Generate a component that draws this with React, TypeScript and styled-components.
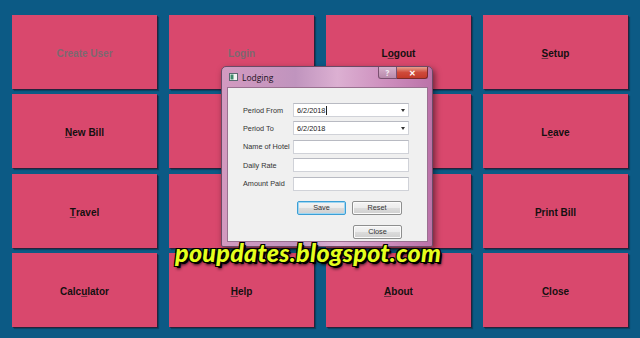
import React from "react";
import styled, { createGlobalStyle } from "styled-components";

const Global = createGlobalStyle`
  html, body { margin: 0; padding: 0; }
  body { background: #0c5a85; width: 640px; height: 338px; overflow: hidden; font-family: "Liberation Sans", Arial, sans-serif; }
`;

const Page = styled.div`
  position: relative;
  width: 640px;
  height: 338px;
  box-sizing: border-box;
  padding: 15px 12px 0 12px;
  background: #0c5a85;
`;

const Grid = styled.div`
  display: grid;
  grid-template-columns: repeat(4, 145px);
  grid-auto-rows: 74px;
  column-gap: 12px;
  row-gap: 5.33px;
`;

const Tile = styled.div<{ $disabled?: boolean }>`
  background: #d9486d;
  box-shadow: 1px 1px 0 rgba(60, 10, 30, 0.55), 2px 2px 1px rgba(0, 0, 0, 0.25);
  display: flex;
  align-items: center;
  justify-content: center;
  font-weight: bold;
  font-size: 10px;
  padding-top: 3px;
  box-sizing: border-box;
  color: ${(p) => (p.$disabled ? "#7d6870" : "#141010")};
  u { text-decoration-color: #6a3040; text-underline-offset: 1px; }
`;

const Dialog = styled.div`
  position: absolute;
  left: 221px;
  top: 66px;
  width: 212px;
  height: 181px;
  box-sizing: border-box;
  border: 1px solid #6b4a66;
  border-radius: 5px 5px 2px 2px;
  background: linear-gradient(90deg, #d39ac0 0%, #c094be 35%, #dcb0d2 55%, #cc8cbc 80%, #bb72a8 100%);
  box-shadow: 2px 3px 6px rgba(0, 0, 0, 0.5);
  display: flex;
  flex-direction: column;
  padding: 0 4px 4px 5px;
`;

const TitleBar = styled.div`
  height: 20px;
  display: flex;
  align-items: center;
  gap: 4px;
  padding-left: 2px;
  font-family: "Open Sans", "Liberation Sans", sans-serif;
  font-size: 8.5px;
  color: #1a1020;
`;

const TitleText = styled.span`
  flex: 1;
`;

const TitleButtons = styled.div`
  align-self: flex-start;
  display: flex;
`;

const HelpBtn = styled.div`
  width: 19px;
  height: 12px;
  box-sizing: border-box;
  border: 1px solid #7a5070;
  border-top: none;
  border-radius: 0 0 0 3px;
  background: linear-gradient(#d7b0cc, #b889ab);
  color: #f4eef4;
  font-size: 8px;
  font-weight: bold;
  display: flex;
  align-items: center;
  justify-content: center;
`;

const CloseBtn = styled.div`
  width: 31px;
  height: 12px;
  box-sizing: border-box;
  border: 1px solid #7a2a2a;
  border-top: none;
  border-left: none;
  border-radius: 0 0 3px 0;
  background: linear-gradient(#e8a090, #cf4a3a 50%, #c33a2a);
  color: #fff;
  font-size: 8px;
  font-weight: bold;
  display: flex;
  align-items: center;
  justify-content: center;
`;

const Client = styled.div`
  flex: 1;
  background: #f0f0f0;
  border: 1px solid #9a7090;
  display: flex;
  flex-direction: column;
  padding: 15px 0 0 15px;
  font-family: "Liberation Sans", Arial, sans-serif;
  font-size: 7.3px;
  color: #333;
`;

const Form = styled.div`
  display: grid;
  grid-template-columns: 50px 116px;
  grid-auto-rows: 14px;
  row-gap: 4.4px;
  align-items: center;
`;

const Label = styled.div`
  white-space: nowrap;
`;

const Field = styled.div`
  height: 14px;
  box-sizing: border-box;
  background: #fff;
  border: 1px solid #d0d2d8;
  border-top-color: #b8bac2;
  display: flex;
  align-items: center;
  padding-left: 3px;
  color: #222;
  position: relative;
`;

const Caret = styled.span`
  display: inline-block;
  width: 1px;
  height: 9px;
  background: #222;
  margin-left: 0.5px;
`;

const Arrow = styled.span`
  position: absolute;
  right: 3px;
  top: 5px;
  width: 0;
  height: 0;
  border-left: 2.5px solid transparent;
  border-right: 2.5px solid transparent;
  border-top: 3px solid #333;
`;

const ButtonRow = styled.div<{ $left: number; $top: number }>`
  display: flex;
  gap: 6px;
  margin-left: ${(p) => p.$left}px;
  margin-top: ${(p) => p.$top}px;
`;

const Btn = styled.div<{ $focus?: boolean; $w: number }>`
  width: ${(p) => p.$w}px;
  height: 14px;
  box-sizing: border-box;
  border: 1px solid ${(p) => (p.$focus ? "#3c9fd6" : "#8e8f8f")};
  border-radius: 2px;
  background: linear-gradient(#f4f4f4 0%, #ebebeb 50%, #dcdcdc 51%, #cfcfcf 100%);
  box-shadow: ${(p) => (p.$focus ? "inset 0 0 0 1px #9fd6f2" : "inset 0 0 0 1px #fbfbfb")};
  display: flex;
  align-items: center;
  justify-content: center;
  color: #333;
`;

const Watermark = styled.div`
  position: absolute;
  left: 175px;
  top: 237px;
  font-family: "Lato", "Open Sans", sans-serif;
  font-weight: 900;
  font-style: italic;
  font-size: 25px;
  letter-spacing: 0.3px;
  color: #e4ff1e;
  -webkit-text-stroke: 2px #000;
  paint-order: stroke fill;
  text-shadow: 1px 1px 0 #000, 2px 2px 0 #000, -1px -1px 0 #000, 1px -1px 0 #000, -1px 1px 0 #000, 2px 3px 3px rgba(0,0,0,0.8);
  white-space: nowrap;
`;

const AppIcon = () => (
  <svg width="9" height="8" viewBox="0 0 9 8">
    <rect x="0.5" y="0.5" width="8" height="7" fill="#f4f4f4" stroke="#5a6a70" />
    <rect x="1.5" y="1.5" width="3" height="5" fill="#3f8a6c" />
  </svg>
);

type T = { label: React.ReactNode; disabled?: boolean };

const tiles: T[] = [
  { label: "Create User", disabled: true },
  { label: "Login", disabled: true },
  { label: <>L<u>o</u>gout</> },
  { label: <><u>S</u>etup</> },
  { label: <><u>N</u>ew Bill</> },
  { label: "" },
  { label: "" },
  { label: <>L<u>e</u>ave</> },
  { label: <><u>T</u>ravel</> },
  { label: "" },
  { label: "" },
  { label: <><u>P</u>rint Bill</> },
  { label: <>Calc<u>u</u>lator</> },
  { label: <><u>H</u>elp</> },
  { label: <><u>A</u>bout</> },
  { label: <><u>C</u>lose</> },
];

export default function App() {
  return (
    <Page>
      <Global />
      <Grid>
        {tiles.map((t, i) => (
          <Tile key={i} $disabled={t.disabled}>
            {t.label}
          </Tile>
        ))}
      </Grid>
      <Dialog>
        <TitleBar>
          <AppIcon />
          <TitleText>Lodging</TitleText>
          <TitleButtons>
            <HelpBtn>?</HelpBtn>
            <CloseBtn>✕</CloseBtn>
          </TitleButtons>
        </TitleBar>
        <Client>
          <Form>
            <Label>Period From</Label>
            <Field>
              6/2/2018<Caret />
              <Arrow />
            </Field>
            <Label>Period To</Label>
            <Field>
              6/2/2018
              <Arrow />
            </Field>
            <Label>Name of Hotel</Label>
            <Field />
            <Label>Daily Rate</Label>
            <Field />
            <Label>Amount Paid</Label>
            <Field />
          </Form>
          <ButtonRow $left={54} $top={10}>
            <Btn $w={49} $focus>Save</Btn>
            <Btn $w={50}>Reset</Btn>
          </ButtonRow>
          <ButtonRow $left={110} $top={10}>
            <Btn $w={49}>Close</Btn>
          </ButtonRow>
        </Client>
      </Dialog>
      <Watermark>poupdates.blogspot.com</Watermark>
    </Page>
  );
}
